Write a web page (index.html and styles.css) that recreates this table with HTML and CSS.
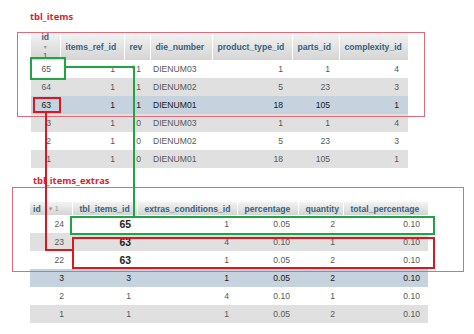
FILE: index.html
```html
<!DOCTYPE html>
<html lang="en">
<head>
    <meta charset="UTF-8">
    <meta name="viewport" content="width=device-width, initial-scale=1.0">
    <title>tbl_items / tbl_items_extras</title>
    <link rel="stylesheet" href="styles.css">
</head>
<body>
    <main class="page">
        <section class="block block-items">
            <h2 class="block-title">tbl_items</h2>
            <table class="grid grid-items">
                <colgroup>
                    <col class="w29"><col class="w64"><col class="w26"><col class="w62">
                    <col class="w80"><col class="w47"><col class="w69">
                </colgroup>
                <thead>
                    <tr>
                        <th class="sort-stack">
                            <span class="name">id</span>
                            <span class="sort">&#9662;</span>
                            <span class="sort-no">1</span>
                        </th>
                        <th>items_ref_id</th>
                        <th>rev</th>
                        <th>die_number</th>
                        <th>product_type_id</th>
                        <th>parts_id</th>
                        <th>complexity_id</th>
                    </tr>
                </thead>
                <tbody>
                    <tr><td>65</td><td>1</td><td>1</td><td class="text">DIENUM03</td><td>1</td><td>1</td><td>4</td></tr>
                    <tr><td>64</td><td>1</td><td>1</td><td class="text">DIENUM02</td><td>5</td><td>23</td><td>3</td></tr>
                    <tr class="marked"><td>63</td><td>1</td><td>1</td><td class="text">DIENUM01</td><td>18</td><td>105</td><td>1</td></tr>
                    <tr><td>3</td><td>1</td><td>0</td><td class="text">DIENUM03</td><td>1</td><td>1</td><td>4</td></tr>
                    <tr><td>2</td><td>1</td><td>0</td><td class="text">DIENUM02</td><td>5</td><td>23</td><td>3</td></tr>
                    <tr><td>1</td><td>1</td><td>0</td><td class="text">DIENUM01</td><td>18</td><td>105</td><td>1</td></tr>
                </tbody>
            </table>
        </section>

        <section class="block block-extras">
            <h2 class="block-title">tbl_items_extras</h2>
            <table class="grid grid-extras">
                <colgroup>
                    <col class="w42"><col class="w65"><col class="w100"><col class="w61">
                    <col class="w45"><col class="w85">
                </colgroup>
                <thead>
                    <tr>
                        <th>
                            <div class="sort-inline">
                                <span class="name">id</span>
                                <span class="sort">&#9662; 1</span>
                            </div>
                        </th>
                        <th>tbl_items_id</th>
                        <th>extras_conditions_id</th>
                        <th>percentage</th>
                        <th>quantity</th>
                        <th>total_percentage</th>
                    </tr>
                </thead>
                <tbody>
                    <tr><td>24</td><td class="ref strong">65</td><td>1</td><td>0.05</td><td>2</td><td>0.10</td></tr>
                    <tr><td>23</td><td class="ref strong">63</td><td>4</td><td>0.10</td><td>1</td><td>0.10</td></tr>
                    <tr><td>22</td><td class="ref strong">63</td><td>1</td><td>0.05</td><td>2</td><td>0.10</td></tr>
                    <tr class="marked"><td>3</td><td class="ref">3</td><td>1</td><td>0.05</td><td>2</td><td>0.10</td></tr>
                    <tr><td>2</td><td class="ref">1</td><td>4</td><td>0.10</td><td>1</td><td>0.10</td></tr>
                    <tr><td>1</td><td class="ref">1</td><td>1</td><td>0.05</td><td>2</td><td>0.10</td></tr>
                </tbody>
            </table>
        </section>

        <!-- annotation layer drawn over the screenshot -->
        <svg class="marks" width="474" height="334" viewBox="0 0 474 334">
            <rect class="frame" x="17.5" y="32.5" width="407" height="84"/>
            <rect class="frame" x="12.5" y="187.5" width="451" height="84"/>

            <rect class="green" x="31" y="58" width="34" height="21"/>
            <polyline class="green" points="65,67 134,67 134,217"/>
            <circle class="dot" cx="133" cy="67" r="1.5"/>
            <rect class="green" x="71" y="217" width="363" height="17"/>

            <rect class="red" x="34" y="98" width="26" height="14"/>
            <polyline class="red" points="46,112 46,250 73,250"/>
            <rect class="red" x="73" y="238" width="361" height="30"/>
        </svg>
    </main>
</body>
</html>
```

FILE: styles.css
```css
body {
    margin: 0;
    background: #fff;
    font-family: "Liberation Sans", Arial, sans-serif;
}

.page {
    position: relative;
    width: 474px;
    height: 334px;
    overflow: hidden;
}

.block-title {
    margin: 0;
    font-family: "Open Sans", "Liberation Sans", sans-serif;
    font-size: 9.4px;
    font-weight: 700;
    line-height: 12px;
    color: #e0212d;
}

.block-items {
    padding: 11px 0 0 30px;
}

.block-items .grid {
    margin: 10px 0 0 1px;
    width: 377px;
}

.block-extras {
    padding: 7px 0 0 33px;
}

.block-extras .grid {
    margin: 15px 0 0 -3px;
    width: 398px;
}

/* tables */
.grid {
    border-collapse: collapse;
    table-layout: fixed;
    font-size: 8.6px;
    color: #585858;
}

.w26 { width: 26px; }
.w29 { width: 29px; }
.w42 { width: 42px; }
.w45 { width: 45px; }
.w47 { width: 47px; }
.w61 { width: 61px; }
.w62 { width: 62px; }
.w64 { width: 64px; }
.w65 { width: 65px; }
.w69 { width: 69px; }
.w80 { width: 80px; }
.w85 { width: 85px; }
.w100 { width: 100px; }

.grid th {
    padding: 0 0 0 5px;
    background: linear-gradient(#f3f3f3, #d4d4d4);
    border-right: 1px solid #fff;
    color: #35627f;
    font-weight: bold;
    text-align: left;
    white-space: nowrap;
    overflow: hidden;
}

.grid th:last-child {
    border-right: none;
}

.grid-items th {
    height: 27px;
}

.grid-extras th {
    height: 13px;
    padding-left: 7px;
}

.grid td {
    height: 18px;
    padding: 0 9px 0 0;
    text-align: right;
    white-space: nowrap;
    background: #fff;
}

.grid tbody tr:nth-child(even) td {
    background: #e0e0e0;
}

.grid tbody tr.marked td {
    background: #c6d2de;
    color: #1a1a1a;
}

.grid td.text {
    text-align: left;
    padding: 0 0 0 3px;
}

.grid-extras td {
    padding-right: 8px;
}

.grid-extras td.ref {
    padding-right: 6px;
}

.grid td.strong {
    font-size: 10.4px;
    font-weight: bold;
    color: #222;
}

/* sort indicators */
.grid th.sort-stack {
    padding: 0;
    text-align: center;
    line-height: 9px;
    vertical-align: top;
}

.sort-stack span {
    display: block;
}

.sort {
    font-family: "DejaVu Sans", sans-serif;
    font-size: 6px;
    font-weight: normal;
    color: #999;
}

.sort-no {
    font-weight: normal;
    color: #555;
    font-size: 8px;
}

.sort-inline {
    display: flex;
    align-items: center;
    gap: 8px;
    margin-left: -4px;
}

.sort-inline .sort {
    font-size: 7px;
}

/* annotation overlay */
.marks {
    position: absolute;
    left: 0;
    top: 0;
    pointer-events: none;
}

.marks rect,
.marks polyline {
    fill: none;
}

.marks .frame {
    stroke: #e36a78;
    stroke-width: 1;
}

.marks .green {
    stroke: #1fa642;
    stroke-width: 2;
}

.marks .red {
    stroke: #e0161f;
    stroke-width: 2;
}

.marks .dot {
    fill: #1fa642;
}
```
